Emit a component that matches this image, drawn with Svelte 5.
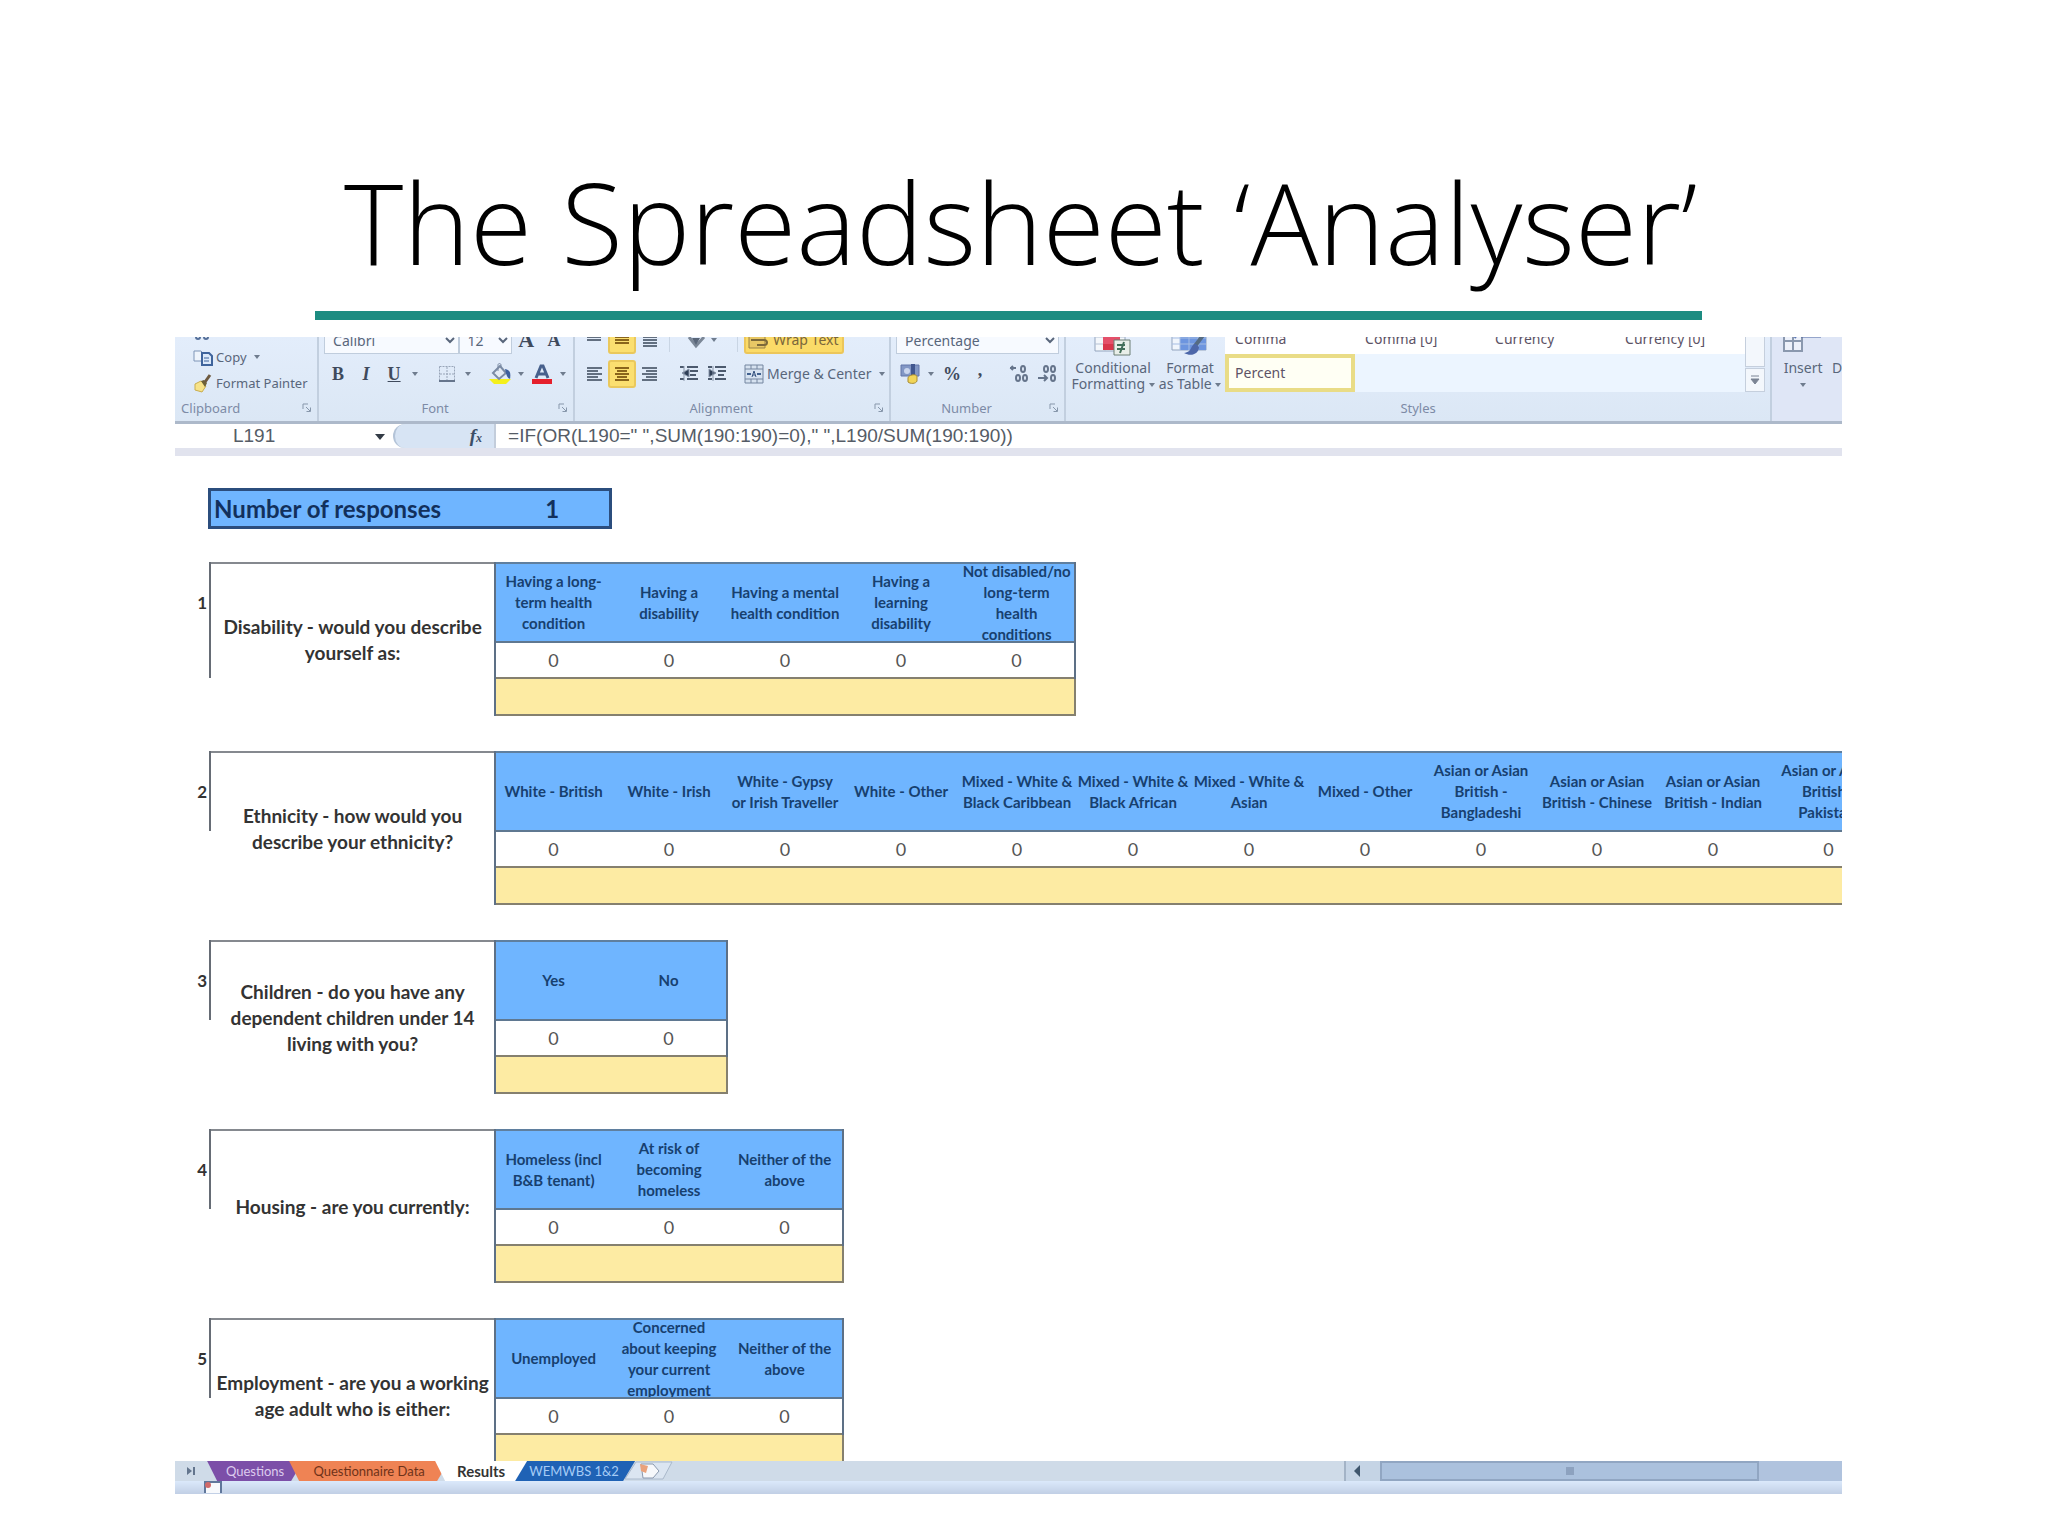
<script lang="ts">
    type Question = {
        label: string;
        options: string[];
        longRule?: boolean;
    };

    const questions: Question[] = [
        {
            label: "Disability - would you describe\nyourself as:",
            options: [
                "Having a long-\nterm health\ncondition",
                "Having a\ndisability",
                "Having a mental\nhealth condition",
                "Having a\nlearning\ndisability",
                "Not disabled/no\nlong-term\nhealth\nconditions"
            ],
            longRule: true
        },
        {
            label: "Ethnicity - how would you\ndescribe your ethnicity?",
            options: [
                "White - British",
                "White - Irish",
                "White - Gypsy\nor Irish Traveller",
                "White - Other",
                "Mixed - White &\nBlack Caribbean",
                "Mixed - White &\nBlack African",
                "Mixed - White &\nAsian",
                "Mixed - Other",
                "Asian or Asian\nBritish -\nBangladeshi",
                "Asian or Asian\nBritish - Chinese",
                "Asian or Asian\nBritish - Indian",
                "Asian or Asian\nBritish -\nPakistani"
            ]
        },
        {
            label: "Children - do you have any\ndependent children under 14\nliving with you?",
            options: ["Yes", "No"]
        },
        {
            label: "Housing - are you currently:",
            options: ["Homeless (incl\nB&B tenant)", "At risk of\nbecoming\nhomeless", "Neither of the\nabove"]
        },
        {
            label: "Employment - are you a working\nage adult who is either:",
            options: ["Unemployed", "Concerned\nabout keeping\nyour current\nemployment", "Neither of the\nabove"]
        }
    ];

    const topStyles = ["Comma", "Comma [0]", "Currency", "Currency [0]"];

    let cell = "L191";
    let formula = '=IF(OR(L190=" ",SUM(190:190)=0)," ",L190/SUM(190:190))';
</script>

{#snippet caret()}
    <svg class="caret" width="14" height="8" viewBox="0 0 14 8"><path d="M4 2h6L7 6z" fill="#6f7c8e" /></svg>
{/snippet}

{#snippet lines(widths)}
    <svg width="18" height="16" viewBox="0 0 18 16">
        {#each widths as w, i}
            <rect x={w[0]} y={1 + i * 3} width={w[1]} height="2" />
        {/each}
    </svg>
{/snippet}

{#snippet footer(name)}
    <div class="caption">
        <span>{name}</span>
        <svg width="10" height="10" viewBox="0 0 10 10" fill="none" stroke="#8797ab"><path d="M1 6V1h5M4 4l4 4M8.500 4.500v4h-4" /></svg>
    </div>
{/snippet}

<main class="slide">
    <header>
        <h1>The Spreadsheet ‘Analyser’</h1>
    </header>

    <section class="excel">
        <div class="ribbon">
            <div class="group clipboard">
                <button class="command" aria-label="Cut">
                    <svg width="20" height="20" viewBox="0 0 20 20" fill="none" stroke="#55709a" stroke-width="2"><path d="M6 2l6 11M13 2L7 13" /><circle cx="5" cy="16" r="2" /><circle cx="13" cy="16" r="2" /></svg>
                </button>
                <button class="command">
                    <svg width="20" height="18" viewBox="0 0 20 18">
                        <path d="M1 3h7l2 2v8H1z" fill="#eef4fc" stroke="#7f96b8" />
                        <path d="M9 5h7l3 3v9H9z" fill="#dce9fa" stroke="#3f649c" stroke-width="2" />
                        <path d="M11 10h5M11 13h5" stroke="#3f649c" />
                    </svg>
                    Copy {@render caret()}
                </button>
                <button class="command">
                    <svg width="20" height="20" viewBox="0 0 20 20">
                        <path d="M2 11l6-3 5 5-4 6-7-2z" fill="#f7e389" stroke="#c9ad4e" />
                        <path d="M8 8l3-1 3 3-2 4z" fill="#6e6238" />
                        <path d="M12 9l5-7" stroke="#6e5a40" stroke-width="3" />
                    </svg>
                    Format Painter
                </button>
                {@render footer("Clipboard")}
            </div>

            <div class="group font">
                <div class="row upper">
                    <select class="face" aria-label="Font"><option>Calibri</option></select>
                    <select class="size" aria-label="Font size"><option>12</option></select>
                    <button class="tool big" aria-label="Grow font">A</button>
                    <button class="tool grow" aria-label="Shrink font">A</button>
                </div>
                <div class="row lower">
                    <button class="tool"><b>B</b></button>
                    <button class="tool"><i>I</i></button>
                    <button class="tool"><u>U</u></button>
                    {@render caret()}
                    <span class="sep"></span>
                    <button class="tool" aria-label="Borders">
                        <svg width="18" height="18" viewBox="0 0 18 18" fill="none" stroke="#98a5b8"><path d="M1.500 1.500h15v15M1.500 1.500v15M9 2v14M2 9h14" stroke-dasharray="2 1" /><path d="M1 16h16" stroke="#66758c" stroke-width="2" /></svg>
                    </button>
                    {@render caret()}
                    <span class="sep"></span>
                    <button class="tool" aria-label="Fill colour">
                        <svg width="24" height="22" viewBox="0 0 24 22">
                            <path d="M1 16h22l-5 5H6z" fill="#f4f01c" />
                            <path d="M5 10l7-7 6 7-7 6z" fill="#e4ebf4" stroke="#7b8ba4" stroke-width="2" />
                            <path d="M10 8V2c0-2 3-2 3 0v3" fill="none" stroke="#7b8ba4" />
                            <path d="M17 6c5 1 6 4 5 10-3-1-4-5-5-10z" fill="#3d5f9c" />
                        </svg>
                    </button>
                    {@render caret()}
                    <button class="tool" aria-label="Font colour">
                        <svg width="20" height="22" viewBox="0 0 20 22"><path d="M4 15L9 3h2l5 12M6 11h8" fill="none" stroke="#47608c" stroke-width="3" /><rect y="16" width="20" height="5" fill="#e5202c" /></svg>
                    </button>
                    {@render caret()}
                </div>
                {@render footer("Font")}
            </div>

            <div class="group alignment">
                <div class="row upper">
                    <button class="tool" aria-label="Top align">{@render lines([[2, 14], [2, 14], [2, 14]])}</button>
                    <button class="tool on" aria-label="Middle align">{@render lines([[2, 14], [2, 14], [2, 14], [2, 14]])}</button>
                    <button class="tool" aria-label="Bottom align">{@render lines([[2, 14], [2, 14], [2, 14], [2, 14], [2, 14]])}</button>
                    <span class="sep"></span>
                    <button class="tool turn" aria-label="Orientation">
                        <svg width="20" height="18" viewBox="0 0 20 18"><path d="M2 6l7 9 8-9" fill="none" stroke="#7b8797" stroke-width="3" /><path d="M5 7h8l-4 7z" fill="#596679" /></svg>
                        {@render caret()}
                    </button>
                    <span class="sep"></span>
                    <button class="wrap">
                        <svg width="22" height="20" viewBox="0 0 22 20"><path d="M1 1h16v17H1z" fill="#e8c765" stroke="#9a8349" /><path d="M3 6h11M3 10h13c4 0 4 5 0 5H9" fill="none" stroke="#7c693a" stroke-width="2" /></svg>
                        Wrap Text
                    </button>
                </div>
                <div class="row lower">
                    <button class="tool" aria-label="Align left">{@render lines([[2, 15], [2, 11], [2, 15], [2, 11], [2, 15]])}</button>
                    <button class="tool on" aria-label="Centre">{@render lines([[2, 14], [4, 10], [2, 14], [4, 10], [2, 14]])}</button>
                    <button class="tool" aria-label="Align right">{@render lines([[1, 15], [5, 11], [1, 15], [5, 11], [1, 15]])}</button>
                    <span class="sep"></span>
                    <button class="tool" aria-label="Decrease indent">
                        <svg width="20" height="18" viewBox="0 0 20 18"><path d="M1 2h4M8 2h11M11 6h8M11 10h6M8 14h11M1 14h4" stroke="#4c5a6e" stroke-width="2" /><path d="M10 4v8L3 8zM5 1v15" fill="#2f3f57" stroke="#8996aa" /></svg>
                    </button>
                    <button class="tool" aria-label="Increase indent">
                        <svg width="20" height="18" viewBox="0 0 20 18"><path d="M1 2h4M8 2h11M11 6h8M11 10h6M8 14h11M1 14h4" stroke="#4c5a6e" stroke-width="2" /><path d="M2 4v8l7-4zM6 1v15" fill="#2f3f57" stroke="#8996aa" /></svg>
                    </button>
                    <span class="sep"></span>
                    <button class="merge">
                        <svg width="20" height="20" viewBox="0 0 20 20"><path d="M1 1h18v18H1zM1 5h18M1 15h18M7 1v4M13 1v4M7 15v4M13 15v4" fill="#d6e2f0" stroke="#7486a0" /><path d="M3 10h4M17 10h-4" stroke="#41618f" stroke-width="2" /><path d="M8 13l2-6 2 6M9 11h2" fill="none" stroke="#34517e" /></svg>
                        Merge &amp; Center {@render caret()}
                    </button>
                </div>
                {@render footer("Alignment")}
            </div>

            <div class="group number">
                <div class="row upper">
                    <select class="format" aria-label="Number format"><option>Percentage</option></select>
                </div>
                <div class="row lower">
                    <button class="tool" aria-label="Accounting format">
                        <svg width="20" height="22" viewBox="0 0 20 22"><path d="M1 2h18v11H1z" fill="#8297c5" stroke="#6276aa" /><path d="M13 1v12" stroke="#41578f" stroke-width="4" /><circle cx="7" cy="8" r="3" fill="#c9d5ee" /><path d="M8 15c0-3 9-5 9-1v4c-1 3-7 3-9 1z" fill="#f1d558" stroke="#a78b35" /></svg>
                    </button>
                    {@render caret()}
                    <button class="tool">%</button>
                    <button class="tool comma">,</button>
                    <span class="sep"></span>
                    <button class="tool" aria-label="Increase decimal">
                        <svg width="20" height="18" viewBox="0 0 20 18" fill="none" stroke="#65748b" stroke-width="2"><path d="M7 3H1M4 1L2 3l2 2" /><ellipse cx="14" cy="4" rx="2" ry="3" /><ellipse cx="9" cy="13" rx="2" ry="3" /><ellipse cx="16" cy="13" rx="2" ry="3" /></svg>
                    </button>
                    <button class="tool" aria-label="Decrease decimal">
                        <svg width="20" height="18" viewBox="0 0 20 18" fill="none" stroke="#65748b" stroke-width="2"><ellipse cx="9" cy="4" rx="2" ry="3" /><ellipse cx="16" cy="4" rx="2" ry="3" /><path d="M1 13h8M7 10l3 3-3 3" /><ellipse cx="16" cy="13" rx="2" ry="3" /></svg>
                    </button>
                </div>
                {@render footer("Number")}
            </div>

            <div class="group styles">
                <div class="styles-body">
                    <button class="tall">
                        <svg width="38" height="34" viewBox="0 0 38 34">
                            <path d="M1 1h30v28H1z" fill="#f4f7fb" stroke="#93a4bd" />
                            <path d="M1 8h30M1 15h30M1 22h30M11 1v28M21 1v28" stroke="#b4c1d4" />
                            <path d="M9 5h8v9H9zM9 22h12v6H9z" fill="#d8354b" />
                            <path d="M9 14h17v8H9z" fill="#e4506a" />
                            <path d="M20 18h16v15H20z" fill="#e9efe9" stroke="#6d7f75" />
                            <path d="M23 23h8M23 27h8M30 20l-4 11" stroke="#44705a" stroke-width="2" />
                        </svg>
                        <span>Conditional<br />Formatting {@render caret()}</span>
                    </button>
                    <button class="tall table-format">
                        <svg width="38" height="34" viewBox="0 0 38 34">
                            <path d="M1 3h34v25H1z" fill="#f0f5fc" stroke="#93a4bd" />
                            <path d="M9 10h26v18H9z" fill="#6d95df" />
                            <path d="M1 10h34M1 16h34M1 22h34M9 3v25M18 3v25M27 3v25" stroke="#a6bde3" />
                            <path d="M36 8L24 24" stroke="#556b82" stroke-width="4" />
                            <path d="M25 22c-6 0-3 8-12 9 7 4 15 1 15-6z" fill="#4d67a9" />
                        </svg>
                        <span>Format<br />as Table {@render caret()}</span>
                    </button>
                    <div class="gallery">
                        {#each topStyles as style}
                            <button class="style">{style}</button>
                        {/each}
                        <button class="style chosen">Percent</button>
                    </div>
                    <div class="stepper">
                        <button aria-label="Scroll styles"></button>
                        <button aria-label="More styles"><svg width="12" height="12" viewBox="0 0 12 12"><path d="M2 2h8M2 5h8l-4 5z" fill="#7b8494" stroke="#7b8494" /></svg></button>
                    </div>
                </div>
                <div class="caption"><span>Styles</span></div>
            </div>

            <div class="group cells">
                <div class="cells-body">
                    <button class="tall insert">
                        <svg width="40" height="34" viewBox="0 0 40 34"><path d="M1 1h18v28H1zM1 10h18M1 19h18M10 1v28" fill="#edf1fa" stroke="#8a98ae" stroke-width="2" /><path d="M18 9h20v6H18z" fill="#7b8fbd" stroke="#4c64a0" /><path d="M17 12h-7M13 8l-4 4 4 4" fill="none" stroke="#5d79b6" stroke-width="2" /></svg>
                        <span>Insert<br />{@render caret()}</span>
                    </button>
                    <button class="tall delete"><span>Delete<br />&nbsp;</span></button>
                </div>
                <div class="caption"></div>
            </div>
        </div>

        <div class="formula-bar">
            <input class="name-box" aria-label="Name box" bind:value={cell} />
            <button class="name-arrow" aria-label="Names"><svg width="10" height="6" viewBox="0 0 10 6"><path d="M0 0h10L5 6z" fill="#333b46" /></svg></button>
            <button class="fx" aria-label="Insert function"><i>f<small>x</small></i></button>
            <input class="formula" aria-label="Formula" bind:value={formula} />
        </div>

        <div class="sheet">
            <div class="responses">
                <span>Number of responses</span>
                <span class="count">1</span>
            </div>

            {#each questions as question, i}
                <table>
                    <colgroup>
                        <col class="index-col" />
                        <col class="label-col" />
                        {#each question.options as _}
                            <col class="option-col" />
                        {/each}
                    </colgroup>
                    <tbody>
                        <tr class="options">
                            <td class="index ruled">{i + 1}</td>
                            <th class="label" rowspan="3" scope="rowgroup">{question.label}</th>
                            {#each question.options as option}
                                <th scope="col"><div>{option}</div></th>
                            {/each}
                        </tr>
                        <tr class="values">
                            <td class:ruled={question.longRule}></td>
                            {#each question.options as _}
                                <td>0</td>
                            {/each}
                        </tr>
                        <tr class="percents">
                            <td></td>
                            <td class="percent" colspan={question.options.length}></td>
                        </tr>
                    </tbody>
                </table>
            {/each}
        </div>

        <div class="tab-bar">
            <button class="last" aria-label="Last sheet"><svg width="12" height="10" viewBox="0 0 12 10"><path d="M2 1l5 4-5 4zM8 1h2v8H8z" fill="#63758d" /></svg></button>
            <button class="tab purple">Questions</button>
            <button class="tab orange">Questionnaire Data</button>
            <button class="tab current">Results</button>
            <button class="tab blue">WEMWBS 1&amp;2</button>
            <button class="new" aria-label="Insert worksheet">
                <svg width="48" height="20" viewBox="0 0 48 20"><path d="M0 18L11 1h36l-9 17z" fill="#dbe5f1" stroke="#aab9cb" /><path d="M16 3h12l6 7-6 7H18z" fill="#f6f8fb" stroke="#8a99ae" /><path d="M15 3l8 2-2 7-5-2z" fill="#eaa27b" /></svg>
            </button>
            <div class="scroller">
                <button class="left" aria-label="Scroll left"><svg width="6" height="12" viewBox="0 0 6 12"><path d="M6 0v12L0 6z" fill="#3f566d" /></svg></button>
                <div class="track"><div class="thumb"><span></span></div></div>
            </div>
        </div>
        <div class="status">
            <svg width="18" height="12" viewBox="0 0 18 12"><path d="M1 1h16v14H1z" fill="#f7f9fc" stroke="#60779b" stroke-width="2" /><circle cx="4" cy="4" r="3" fill="#d0696a" /></svg>
        </div>
    </section>
</main>

<style>
    :global(body) {
        margin: 0;
        background: white;
    }

    .slide {
        display: flex;
        flex-direction: column;
        box-sizing: border-box;
        height: 100vh;
        padding-bottom: 42px;
        overflow: hidden;
        font-family: Lato, "Open Sans", sans-serif;
    }

    header {
        display: flex;
        align-items: flex-end;
        justify-content: center;
        box-sizing: border-box;
        height: 320px;
        margin: 0 16.9% 17px 15.4%;
        padding: 0 0 22px 24px;
        border-bottom: 9px solid #1d8c81;
        flex-shrink: 0;
    }

    h1 {
        margin: 0;
        font-family: "Open Sans", "Noto Sans", sans-serif;
        font-size: 113px;
        line-height: 136px;
        font-weight: 300;
        white-space: nowrap;
        color: black;
    }

    button,
    input,
    select {
        margin: 0;
        padding: 0;
        border: none;
        background: none;
        font: inherit;
        color: inherit;
    }

    svg {
        flex-shrink: 0;
    }

    .excel {
        display: flex;
        flex-direction: column;
        flex: 1;
        min-height: 0;
        margin: 0 10.05% 0 8.55%;
        overflow: hidden;
    }

    /* ribbon */
    .ribbon {
        display: flex;
        flex-shrink: 0;
        height: 84px;
        overflow: hidden;
        border-bottom: 3px solid #adb9ca;
        background: linear-gradient(#e3edfb, #dbe7f5);
        font-family: "Noto Sans", sans-serif;
        font-size: 14px;
        line-height: 16px;
        color: #59667b;
    }

    .group {
        display: flex;
        flex-direction: column;
        justify-content: flex-end;
        box-sizing: border-box;
        flex-shrink: 0;
        padding: 0 5px;
        border-right: 2px solid #c2cfdf;
        overflow: hidden;
    }

    .clipboard {
        width: 144px;
        padding-left: 18px;
        font-size: 13px;
    }

    .font {
        width: 256px;
    }

    .alignment {
        width: 316px;
    }

    .number {
        width: 175px;
    }

    .styles {
        width: 706px;
    }

    .cells {
        flex: 1;
        border-right: none;
        padding-right: 0;
        background: #dfe6f6;
    }

    .caption {
        display: flex;
        align-items: center;
        flex-shrink: 0;
        height: 23px;
        padding-bottom: 2px;
        font-size: 13px;
        color: #7d8ba6;
    }

    .caption span {
        flex: 1;
        padding-right: 12px;
        text-align: center;
    }

    .styles .caption span {
        padding-right: 0;
    }

    .clipboard .caption {
        margin-left: -12px;
    }

    .clipboard .caption span {
        text-align: left;
    }

    .command {
        display: flex;
        align-items: center;
        gap: 3px;
        flex-shrink: 0;
        height: 26px;
        white-space: nowrap;
    }

    .row {
        display: flex;
        align-items: center;
        flex-shrink: 0;
    }

    .upper {
        height: 28px;
        margin-bottom: 4px;
    }

    .lower {
        height: 32px;
        margin-bottom: 6px;
    }

    select {
        height: 28px;
        box-sizing: border-box;
        padding: 0 4px;
        border: 1px solid #c0cddd;
        background: #f7faff;
    }

    .face {
        width: 136px;
    }

    .size {
        width: 54px;
    }

    .format {
        width: 165px;
    }

    .tool {
        display: flex;
        align-items: center;
        justify-content: center;
        flex-shrink: 0;
        box-sizing: border-box;
        width: 28px;
        height: 28px;
        font-family: "Liberation Serif", serif;
        font-size: 18px;
        font-weight: bold;
        color: #3f4a5c;
        fill: #626f80;
    }

    .tool.big {
        font-size: 22px;
    }

    .tool.turn {
        width: 56px;
    }

    .tool.on {
        border: 2px solid #eac85c;
        border-radius: 3px;
        background: #fbdf70;
        fill: #8a651b;
    }

    .tool.comma {
        padding-bottom: 8px;
    }

    .sep {
        width: 1px;
        height: 24px;
        margin: 0 6px 0 5px;
        background: #c9d5e4;
    }

    .wrap,
    .merge {
        display: flex;
        align-items: center;
        gap: 3px;
        box-sizing: border-box;
        height: 28px;
        padding: 0 4px 0 2px;
        white-space: nowrap;
    }

    .wrap {
        border: 2px solid #ecc65a;
        border-radius: 3px;
        background: #fbdb68;
        color: #7a663b;
    }

    .styles-body,
    .cells-body {
        display: flex;
        align-items: flex-end;
        height: 76px;
        flex-shrink: 0;
        margin-bottom: 4px;
    }

    .tall {
        display: flex;
        flex-direction: column;
        align-items: center;
        gap: 4px;
        width: 84px;
        flex-shrink: 0;
        margin-right: -2px;
        white-space: nowrap;
    }

    .tall.insert {
        width: 52px;
        margin: 0;
    }

    .tall .caret {
        margin: 0 -4px;
    }

    .table-format {
        width: 74px;
    }

    .delete {
        align-items: flex-start;
        width: 60px;
        margin-left: 3px;
    }

    .gallery {
        display: grid;
        grid-template-columns: repeat(4, 1fr);
        grid-template-rows: 38px 38px;
        flex: 1;
        background: #ecf5ff;
    }

    .style {
        padding: 8px 0 0 10px;
        text-align: left;
        background: white;
        color: #5d5366;
    }

    .style.chosen {
        border: 4px solid #e9dc86;
        padding: 0 0 0 6px;
        background: #fffff4;
    }

    .stepper {
        display: grid;
        grid-template-rows: 32px 24px;
        width: 20px;
        flex-shrink: 0;
        gap: 1px;
    }

    .stepper button {
        display: flex;
        align-items: center;
        justify-content: center;
        border: 1px solid #c5cfdd;
        background: #f3f7fc;
    }

    /* formula bar */
    .formula-bar {
        display: flex;
        align-items: stretch;
        flex-shrink: 0;
        height: 24px;
        border-bottom: 8px solid #e1e3ee;
        font-family: "Liberation Sans", Arial, sans-serif;
        font-size: 19px;
        color: #555c66;
    }

    .name-box {
        width: 158px;
        text-align: center;
    }

    .name-arrow {
        width: 60px;
        padding-right: 8px;
        text-align: right;
    }

    .name-arrow svg {
        vertical-align: middle;
    }

    .fx {
        width: 103px;
        padding-right: 12px;
        border-left: 2px solid #b4c4d8;
        border-right: 2px solid #c3cddb;
        border-radius: 12px 0 0 12px;
        background: #d7e4f4;
        text-align: right;
        font-family: "Liberation Serif", serif;
        font-weight: bold;
        color: #3c4e66;
    }

    .fx small {
        font-size: 12px;
    }

    .formula {
        flex: 1;
        padding-left: 12px;
    }

    /* worksheet */
    .sheet {
        flex: 1;
        min-height: 0;
        overflow: hidden;
        padding-top: 32px;
    }

    .responses {
        display: flex;
        align-items: center;
        box-sizing: border-box;
        width: 404px;
        height: 41px;
        margin: 0 0 33px 33px;
        padding: 0 3px;
        border: 3px solid #2b4d7d;
        background: #6fb5ff;
        font-size: 24px;
        font-weight: bold;
        color: #12305c;
    }

    .responses span {
        width: 284px;
    }

    .responses .count {
        flex: 1;
        text-align: center;
    }

    table {
        table-layout: fixed;
        width: 0;
        margin-bottom: 35px;
        border-collapse: collapse;
        text-align: center;
    }

    .index-col {
        width: 35px;
    }

    .label-col {
        width: 285px;
    }

    .option-col {
        width: 116px;
    }

    th,
    td {
        padding: 0;
    }

    .options {
        height: 79px;
    }

    .values {
        height: 36px;
    }

    .percents {
        height: 37px;
    }

    .index {
        padding-right: 2px;
        font-size: 17px;
        font-weight: bold;
        text-align: right;
        color: #333;
    }

    .ruled {
        border-right: 2px solid #666c75;
    }

    .label {
        border-top: 2px solid #85898f;
        border-right: 2px solid #5d7086;
        font-size: 19px;
        line-height: 26px;
        white-space: pre;
        color: #333;
    }

    .options th + th {
        border-top: 2px solid #5f7f9f;
        background: #6fb5ff;
        font-size: 15px;
        line-height: 21px;
        color: #17406f;
    }

    .options div {
        display: flex;
        align-items: center;
        justify-content: center;
        height: 77px;
        overflow: hidden;
        white-space: pre;
    }

    .values td + td {
        border-top: 2px solid #5f7891;
        font-size: 18px;
        color: #555;
    }

    .percent {
        border: 2px solid #85806f;
        background: #fdeba3;
    }

    .options th:last-child,
    .values td:last-child {
        border-right: 2px solid #5d7086;
    }

    /* sheet tabs */
    .tab-bar {
        display: flex;
        flex-shrink: 0;
        height: 20px;
        background: #cfdbe8;
        font-size: 13px;
        line-height: 20px;
    }

    .last {
        width: 32px;
        text-align: center;
    }

    .tab {
        margin-right: -14px;
        padding: 0 14px;
        white-space: nowrap;
        clip-path: polygon(0 0, 100% 0, calc(100% - 12px) 100%, 10px 100%);
    }

    .purple {
        width: 96px;
        background: #7c4fa8;
        color: #dccbee;
    }

    .orange {
        width: 160px;
        background: #ef8354;
        color: #6e3219;
    }

    .current {
        width: 92px;
        background: white;
        font-size: 15px;
        font-weight: bold;
        color: #333;
        z-index: 1;
    }

    .blue {
        width: 122px;
        background: #1f62b5;
        color: #a5cbf5;
        clip-path: polygon(12px 0, 100% 0, calc(100% - 12px) 100%, 0 100%);
    }

    .new {
        display: flex;
        margin-left: 4px;
    }

    .scroller {
        display: flex;
        width: 496px;
        margin-left: auto;
        border-left: 2px solid #a3b3c6;
    }

    .left {
        width: 34px;
        padding-right: 12px;
        background: #c5d4e5;
    }

    .left svg,
    .last svg {
        display: block;
        margin: auto;
    }

    .track {
        flex: 1;
        background: #b0c3de;
    }

    .thumb {
        display: flex;
        align-items: center;
        justify-content: center;
        box-sizing: border-box;
        width: 82%;
        height: 20px;
        border: 2px solid #91a6c2;
        background: #abc1dd;
    }

    .thumb span {
        width: 8px;
        height: 8px;
        background: #8da2bf;
    }

    .status {
        flex-shrink: 0;
        height: 13px;
        padding-left: 29px;
        overflow: hidden;
        background: linear-gradient(#dbe9fb, #c1cfe5);
    }

    .status svg {
        display: block;
    }
</style>
